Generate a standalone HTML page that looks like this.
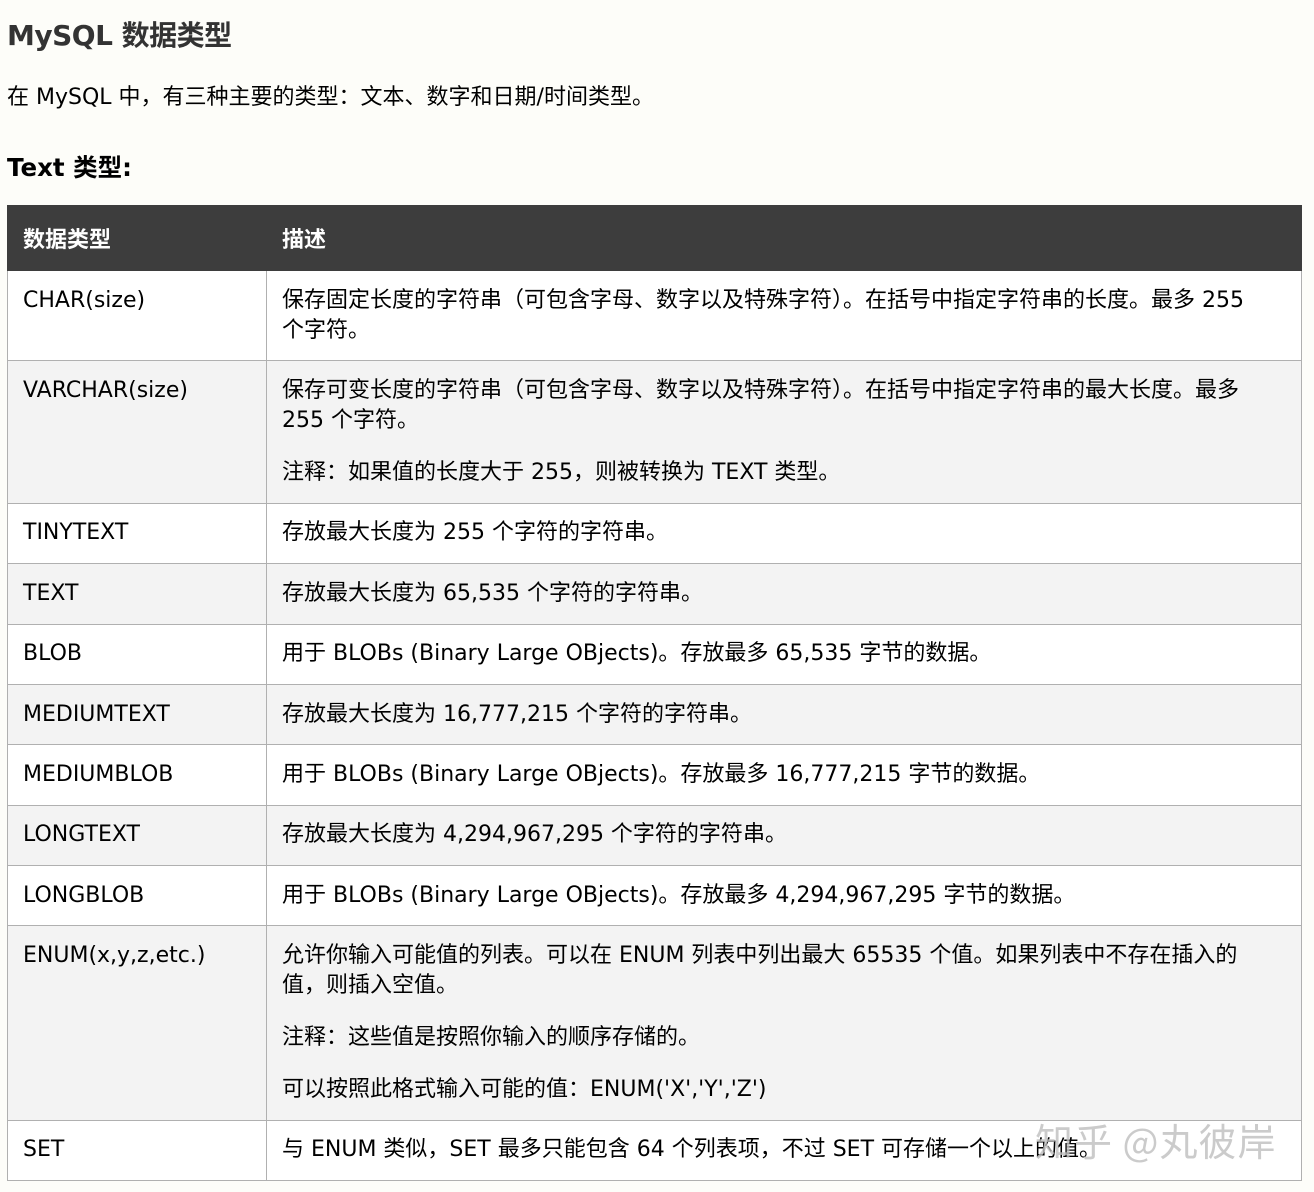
<!DOCTYPE html>
<html><head><meta charset="utf-8"><style>
body{margin:0;background:#fdfdf9;font-family:"DejaVu Sans","Noto Sans CJK SC",sans-serif;color:#000;width:1314px;height:1192px;overflow:hidden;position:relative}
h1{position:absolute;left:7px;top:14px;margin:0;font-size:28px;color:#333;font-weight:bold;letter-spacing:-0.5px}
p.i{position:absolute;left:7px;top:79px;margin:0;font-size:22px;color:#000}
h3{position:absolute;left:7px;top:149px;margin:0;font-size:24.5px;font-weight:bold}
table{position:absolute;left:7px;top:205px;width:1295px;border-collapse:collapse;font-size:22px}
th{background:#3d3d3d;color:#fff;text-align:left;height:65px;padding:0 15px;font-size:22px;font-weight:bold;border:1px solid #3d3d3d;box-sizing:border-box}
td{border:1px solid #b0b0b0;vertical-align:top;padding:14.7px 15px 14.7px 15px;line-height:30px}
td:first-child{width:228px}
td p{margin:22px 0 0}
tr:nth-child(odd) td{background:#f3f3f3}
tr:nth-child(even) td{background:#fff}
.wm{position:absolute;left:1035px;top:1112px;font-size:38px;color:rgba(190,190,190,0.8);font-family:"Noto Sans CJK SC",sans-serif;letter-spacing:1px}
</style></head><body>
<h1>MySQL 数据类型</h1>
<p class="i">在 MySQL 中，有三种主要的类型：文本、数字和日期/时间类型。</p>
<h3>Text 类型:</h3>
<table>
<tr><th style="width:259px">数据类型</th><th>描述</th></tr>
<tr><td>CHAR(size)</td><td>保存固定长度的字符串（可包含字母、数字以及特殊字符）。在括号中指定字符串的长度。最多 255<br>个字符。</td></tr>
<tr><td>VARCHAR(size)</td><td>保存可变长度的字符串（可包含字母、数字以及特殊字符）。在括号中指定字符串的最大长度。最多<br>255 个字符。<p>注释：如果值的长度大于 255，则被转换为 TEXT 类型。</p></td></tr>
<tr><td>TINYTEXT</td><td>存放最大长度为 255 个字符的字符串。</td></tr>
<tr><td>TEXT</td><td>存放最大长度为 65,535 个字符的字符串。</td></tr>
<tr><td>BLOB</td><td>用于 BLOBs (Binary Large OBjects)。存放最多 65,535 字节的数据。</td></tr>
<tr><td>MEDIUMTEXT</td><td>存放最大长度为 16,777,215 个字符的字符串。</td></tr>
<tr><td>MEDIUMBLOB</td><td>用于 BLOBs (Binary Large OBjects)。存放最多 16,777,215 字节的数据。</td></tr>
<tr><td>LONGTEXT</td><td>存放最大长度为 4,294,967,295 个字符的字符串。</td></tr>
<tr><td>LONGBLOB</td><td>用于 BLOBs (Binary Large OBjects)。存放最多 4,294,967,295 字节的数据。</td></tr>
<tr><td>ENUM(x,y,z,etc.)</td><td>允许你输入可能值的列表。可以在 ENUM 列表中列出最大 65535 个值。如果列表中不存在插入的<br>值，则插入空值。<p>注释：这些值是按照你输入的顺序存储的。</p><p>可以按照此格式输入可能的值：ENUM('X','Y','Z')</p></td></tr>
<tr><td>SET</td><td>与 ENUM 类似，SET 最多只能包含 64 个列表项，不过 SET 可存储一个以上的值。</td></tr>
</table>
<div class="wm">知乎 @丸彼岸</div>
</body></html>
